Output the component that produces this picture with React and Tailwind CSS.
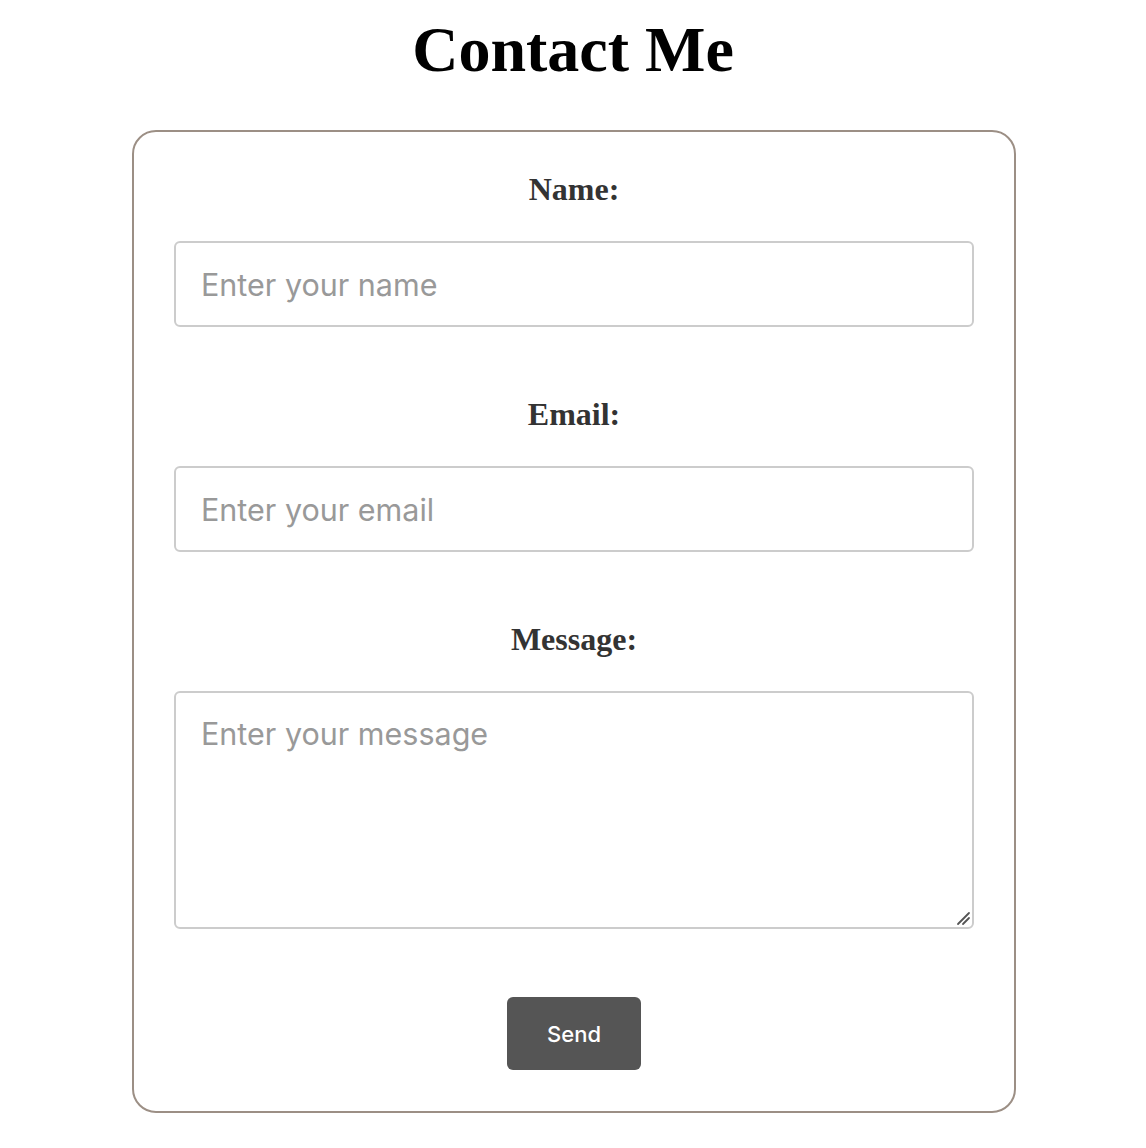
import { useState } from 'react';

const serif = { fontFamily: '"Liberation Serif", "Times New Roman", serif' };

function Field({ label, children }) {
  return (
    <div className="flex flex-col items-center mb-[30px]">
      <label
        className="text-[32px] font-bold text-[#333] leading-none mt-[41px] mb-[36px]"
        style={serif}
      >
        {label}
      </label>
      {children}
    </div>
  );
}

// resize grip drawn over the textarea's corner
function Grip() {
  return (
    <svg
      className="absolute right-[3px] bottom-[3px] pointer-events-none"
      width="16"
      height="16"
      viewBox="0 0 16 16"
    >
      <path d="M3 14 L14 3 M8 14 L14 8" stroke="#555" strokeWidth="1.8" strokeLinecap="round" />
    </svg>
  );
}

export default function App() {
  const [form, setForm] = useState({ name: '', email: '', message: '' });

  const update = (key) => (e) => setForm({ ...form, [key]: e.target.value });

  const inputClass =
    'w-full border-2 border-[#ccc] rounded-md px-[25px] text-[30.5px] text-[#333] placeholder:text-[#999] outline-none';

  return (
    <div className="w-[1146px] min-h-[1148px] bg-white flex flex-col items-center">
      <h1 className="text-[64px] font-bold leading-none mt-[18px] text-black" style={serif}>
        Contact Me
      </h1>

      <form
        className="mt-[48px] ml-[2px] w-[884px] border-2 border-[#9c8f85] rounded-[24px] px-[40px] pb-[41px] flex flex-col"
        style={{ fontFamily: 'Inter, "Noto Sans", sans-serif' }}
        onSubmit={(e) => e.preventDefault()}
      >
        <Field label="Name:">
          <input
            type="text"
            value={form.name}
            onChange={update('name')}
            placeholder="Enter your name"
            className={`${inputClass} h-[86px]`}
          />
        </Field>

        <Field label="Email:">
          <input
            type="email"
            value={form.email}
            onChange={update('email')}
            placeholder="Enter your email"
            className={`${inputClass} h-[86px]`}
          />
        </Field>

        <Field label="Message:">
          <div className="relative w-full">
            <textarea
              value={form.message}
              onChange={update('message')}
              placeholder="Enter your message"
              className={`${inputClass} block h-[238px] pt-[18px] resize-none`}
            />
            <Grip />
          </div>
        </Field>

        <button
          type="submit"
          className="self-center mt-[38px] w-[134px] h-[73px] bg-[#555] text-white text-[22px] font-medium rounded-md pt-[2px]"
        >
          Send
        </button>
      </form>
    </div>
  );
}
